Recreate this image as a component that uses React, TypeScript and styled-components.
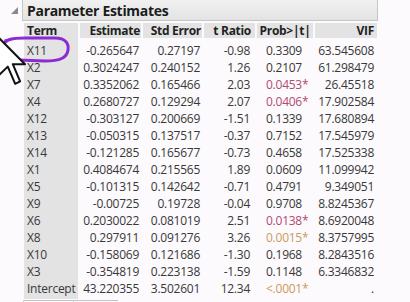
import styled, { createGlobalStyle } from "styled-components";

const GlobalStyle = createGlobalStyle`
  html, body {
    margin: 0;
    padding: 0;
    background: #fcfafc;
  }
  body {
    font-family: "Open Sans", "Noto Sans", sans-serif;
    color: #383838;
  }
`

const Page = styled.div`
  position: relative;
  width: 410px;
  height: 302px;
  overflow: hidden;
`

const OutlineHeader = styled.div`
  display: flex;
  align-items: stretch;
  height: 21px;
`

const Disclosure = styled.div`
  width: 22px;
  display: flex;
  align-items: center;
  justify-content: flex-end;
  padding-right: 3px;
  box-sizing: border-box;
`

const TitleBar = styled.div`
  width: 356px;
  box-sizing: border-box;
  margin-top: -1px;
  border: 1px solid #c6c6c6;
  background: linear-gradient(#f1f1f1, #e3e3e3);
  display: flex;
  align-items: center;
  padding-left: 4px;
`

const Title = styled.h3`
  margin: 0;
  font-size: 14px;
  font-weight: 700;
  color: #1c1c1c;
  letter-spacing: -0.3px;
`

const Columns = styled.div`
  display: flex;
  gap: 2px;
  margin: 2px 0 0 24px;
`

const Column = styled.div<{ $w: number }>`
  width: ${p => p.$w}px;
  display: flex;
  flex-direction: column;
`

const Head = styled.div<{ $align: string; $pad: string }>`
  height: 15px;
  line-height: 15px;
  background: #e3e3e4;
  font-size: 12px;
  font-weight: 700;
  color: #222;
  text-align: ${p => p.$align};
  padding: ${p => p.$pad};
  white-space: nowrap;
  letter-spacing: -0.3px;
`

const Body = styled.div<{ $shade?: boolean }>`
  padding: 4px 0 2px;
  background: ${p => (p.$shade ? "#e3e3e4" : "transparent")};
`

const Cell = styled.div<{ $align: string; $pad: string; $tone?: string }>`
  height: 17px;
  line-height: 17px;
  font-size: 12px;
  letter-spacing: -0.25px;
  white-space: nowrap;
  text-align: ${p => p.$align};
  padding: ${p => p.$pad};
  color: ${p =>
    p.$tone === "red" ? "#b04a73" : p.$tone === "orange" ? "#c99a5e" : "#383838"};
`

const Footer = styled.div`
  display: flex;
  margin: 1px 0 0 23px;
`

const FooterTab = styled.div<{ $w: number }>`
  width: ${p => p.$w}px;
  height: 6px;
  border-top: 1px solid #c4c4c4;
  border-left: 1px solid #d6d6d6;
`

const Overlay = styled.svg`
  position: absolute;
  left: 0;
  top: 0;
  pointer-events: none;
`

type Col = {
  title: string
  w: number
  headAlign: string
  headPad: string
  align: string
  pad: string
  shade?: boolean
}

const cols: Col[] = [
  { title: "Term", w: 54, headAlign: "left", headPad: "0 0 0 3px", align: "left", pad: "0 0 0 3px", shade: true },
  { title: "Estimate", w: 61, headAlign: "right", headPad: "0 1px 0 0", align: "right", pad: "0 2px 0 0" },
  { title: "Std Error", w: 59, headAlign: "right", headPad: "0 1px 0 0", align: "right", pad: "0 2px 0 0" },
  { title: "t Ratio", w: 51, headAlign: "right", headPad: "0 4px 0 0", align: "right", pad: "0 5px 0 0" },
  { title: "Prob>|t|", w: 56, headAlign: "center", headPad: "0", align: "left", pad: "0 0 0 9px" },
  { title: "VIF", w: 62, headAlign: "right", headPad: "0 3px 0 0", align: "right", pad: "0 3px 0 0" },
]

const rows: string[][] = [
  ["X11", "-0.265647", "0.27197", "-0.98", "0.3309", "63.545608"],
  ["X2", "0.3024247", "0.240152", "1.26", "0.2107", "61.298479"],
  ["X7", "0.3352062", "0.165466", "2.03", "0.0453*", "26.45518"],
  ["X4", "0.2680727", "0.129294", "2.07", "0.0406*", "17.902584"],
  ["X12", "-0.303127", "0.200669", "-1.51", "0.1339", "17.680894"],
  ["X13", "-0.050315", "0.137517", "-0.37", "0.7152", "17.545979"],
  ["X14", "-0.121285", "0.165677", "-0.73", "0.4658", "17.525338"],
  ["X1", "0.4084674", "0.215565", "1.89", "0.0609", "11.099942"],
  ["X5", "-0.101315", "0.142642", "-0.71", "0.4791", "9.349051"],
  ["X9", "-0.00725", "0.19728", "-0.04", "0.9708", "8.8245367"],
  ["X6", "0.2030022", "0.081019", "2.51", "0.0138*", "8.6920048"],
  ["X8", "0.297911", "0.091276", "3.26", "0.0015*", "8.3757995"],
  ["X10", "-0.158069", "0.121686", "-1.30", "0.1968", "8.2843516"],
  ["X3", "-0.354819", "0.223138", "-1.59", "0.1148", "6.3346832"],
  ["Intercept", "43.220355", "3.502601", "12.34", "<.0001*", "."],
]

// p < .01 shows orange, p < .05 red
const toneFor = (v: string) => {
  if (!v.endsWith("*")) return undefined
  const n = v.startsWith("<") ? 0 : parseFloat(v)
  return n < 0.01 ? "orange" : "red"
}

const App = () => {
  return (
    <Page>
      <GlobalStyle />
      <OutlineHeader>
        <Disclosure>
          <svg width="8" height="8" viewBox="0 0 8 8">
            <polygon points="7,0 7,7 0,7" fill="#8a8a8a" />
          </svg>
        </Disclosure>
        <TitleBar>
          <Title>Parameter Estimates</Title>
        </TitleBar>
      </OutlineHeader>
      <Columns>
        {cols.map((c, ci) => (
          <Column key={c.title} $w={c.w}>
            <Head $align={c.headAlign} $pad={c.headPad}>{c.title}</Head>
            <Body $shade={c.shade}>
              {rows.map(r => (
                <Cell
                  key={r[0]}
                  $align={c.align}
                  $pad={c.pad}
                  $tone={ci === 4 ? toneFor(r[ci]) : undefined}
                >
                  {r[ci]}
                </Cell>
              ))}
            </Body>
          </Column>
        ))}
      </Columns>
      <Footer>
        <FooterTab $w={49} />
        <FooterTab $w={44} />
      </Footer>
      <Overlay width="90" height="95" viewBox="0 0 90 95">
        <path
          d="M4 45 C4 40 10 38 25 38 L55 38 C66 38 69 44 68 50 C67 58 60 61 45 61 L18 60"
          fill="none"
          stroke="#8c2bd3"
          strokeWidth="3"
          strokeLinecap="round"
        />
        <circle cx="6" cy="41" r="2" fill="#8c2bd3" />
        <polygon
          points="-2,37 -2,76 7.8,66.6 15.2,83.8 20.1,81.3 12.8,64.2 25,64.2"
          fill="#ffffff"
          stroke="#111"
          strokeWidth="2"
          strokeLinejoin="round"
        />
      </Overlay>
    </Page>
  );
}

export default App;
